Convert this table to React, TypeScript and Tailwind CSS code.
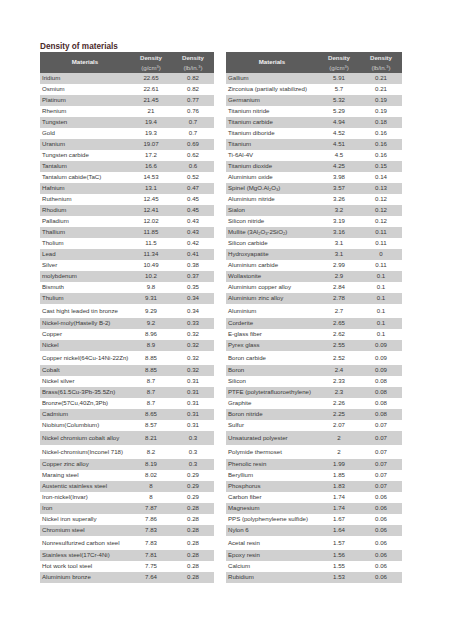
import React from 'react';

type Row = [React.ReactNode, string, string];

const TALL = new Set([21, 25, 32, 33, 41]);

const Sub = ({ children }: { children: React.ReactNode }) => (
  <sub className="text-[4px] align-baseline relative top-[1px]">{children}</sub>
);

const leftRows: Row[] = [
  ['Iridium', '22.65', '0.82'],
  ['Osmium', '22.61', '0.82'],
  ['Platinum', '21.45', '0.77'],
  ['Rhenium', '21', '0.76'],
  ['Tungsten', '19.4', '0.7'],
  ['Gold', '19.3', '0.7'],
  ['Uranium', '19.07', '0.69'],
  ['Tungsten carbide', '17.2', '0.62'],
  ['Tantalum', '16.6', '0.6'],
  ['Tantalum cabide(TaC)', '14.53', '0.52'],
  ['Hafnium', '13.1', '0.47'],
  ['Ruthenium', '12.45', '0.45'],
  ['Rhodium', '12.41', '0.45'],
  ['Palladium', '12.02', '0.43'],
  ['Thallium', '11.85', '0.43'],
  ['Tholium', '11.5', '0.42'],
  ['Lead', '11.34', '0.41'],
  ['Silver', '10.49', '0.38'],
  ['molybdenum', '10.2', '0.37'],
  ['Bismuth', '9.8', '0.35'],
  ['Thulium', '9.31', '0.34'],
  ['Cast hight leaded tin bronze', '9.29', '0.34'],
  ['Nickel-moly(Hastelly B-2)', '9.2', '0.33'],
  ['Copper', '8.96', '0.32'],
  ['Nickel', '8.9', '0.32'],
  ['Copper nickel(64Cu-14Ni-22Zn)', '8.85', '0.32'],
  ['Cobalt', '8.85', '0.32'],
  ['Nickel silver', '8.7', '0.31'],
  ['Brass(61.5Cu-3Pb-35.5Zn)', '8.7', '0.31'],
  ['Bronze(57Cu,40Zn,3Pb)', '8.7', '0.31'],
  ['Cadmium', '8.65', '0.31'],
  ['Niobium(Columbium)', '8.57', '0.31'],
  ['Nickel chromium cobalt alloy', '8.21', '0.3'],
  ['Nickel-chromium(Inconel 718)', '8.2', '0.3'],
  ['Copper zinc alloy', '8.19', '0.3'],
  ['Maraing steel', '8.02', '0.29'],
  ['Austentic stainless steel', '8', '0.29'],
  ['Iron-nickel(Invar)', '8', '0.29'],
  ['Iron', '7.87', '0.28'],
  ['Nickel iron superally', '7.86', '0.28'],
  ['Chromium steel', '7.83', '0.28'],
  ['Nonresulfurized carbon steel', '7.83', '0.28'],
  ['Stainless steel(17Cr-4Ni)', '7.81', '0.28'],
  ['Hot work tool steel', '7.75', '0.28'],
  ['Aluminium bronze', '7.64', '0.28'],
];

const rightRows: Row[] = [
  ['Gallium', '5.91', '0.21'],
  ['Zirconiua (partially stabilized)', '5.7', '0.21'],
  ['Germanium', '5.32', '0.19'],
  ['Titanium nitride', '5.29', '0.19'],
  ['Titanium carbide', '4.94', '0.18'],
  ['Titanium diboride', '4.52', '0.16'],
  ['Titanium', '4.51', '0.16'],
  ['Ti-6Al-4V', '4.5', '0.16'],
  ['Titanium dioxide', '4.25', '0.15'],
  ['Aluminium oxide', '3.98', '0.14'],
  [<>Spinel (MgO.Al<Sub>2</Sub>O<Sub>3</Sub>)</>, '3.57', '0.13'],
  ['Aluminium nitride', '3.26', '0.12'],
  ['Sialon', '3.2', '0.12'],
  ['Silicon nitride', '3.19', '0.12'],
  [<>Mullite (3Al<Sub>2</Sub>O<Sub>3</Sub>-2SiO<Sub>2</Sub>)</>, '3.16', '0.11'],
  ['Silicon carbide', '3.1', '0.11'],
  ['Hydroxyapatite', '3.1', '0'],
  ['Aluminium carbide', '2.99', '0.11'],
  ['Wollastonite', '2.9', '0.1'],
  ['Aluminium copper alloy', '2.84', '0.1'],
  ['Aluminium zinc alloy', '2.78', '0.1'],
  ['Aluminium', '2.7', '0.1'],
  ['Corderite', '2.65', '0.1'],
  ['E-glass fiber', '2.62', '0.1'],
  ['Pyrex glass', '2.55', '0.09'],
  ['Boron carbide', '2.52', '0.09'],
  ['Boron', '2.4', '0.09'],
  ['Silicon', '2.33', '0.08'],
  ['PTFE (polytetrafluoroethylene)', '2.3', '0.08'],
  ['Graphite', '2.26', '0.08'],
  ['Boron nitride', '2.25', '0.08'],
  ['Sulfur', '2.07', '0.07'],
  ['Unsaturated polyester', '2', '0.07'],
  ['Polymide thermoset', '2', '0.07'],
  ['Phenolic resin', '1.99', '0.07'],
  ['Beryllium', '1.85', '0.07'],
  ['Phosphorus', '1.83', '0.07'],
  ['Carbon fiber', '1.74', '0.06'],
  ['Magnesium', '1.74', '0.06'],
  ['PPS (polyphenyleene sulfide)', '1.67', '0.06'],
  ['Nylon 6', '1.64', '0.06'],
  ['Acetal resin', '1.57', '0.06'],
  ['Epoxy resin', '1.56', '0.06'],
  ['Calcium', '1.55', '0.06'],
  ['Rubidium', '1.53', '0.06'],
];

function DensityTable({ rows, nameWidth }: { rows: Row[]; nameWidth: string }) {
  return (
    <div className="flex flex-col">
      <div className="flex h-[21px] bg-[#5c5c5c] font-bold">
        <div className={`${nameWidth} flex items-center justify-center text-[#f2f2f2]`}>Materials</div>
        <div className="w-[42px] flex flex-col items-center justify-center gap-[2px] leading-[8px]">
          <span className="text-[#e8e8e8]">Density</span>
          <span className="font-normal text-[#cfcfcf]">
            (g/cm<sup className="text-[4px]">3</sup>)
          </span>
        </div>
        <div className="w-[42px] flex flex-col items-center justify-center gap-[2px] leading-[8px]">
          <span className="text-[#e8e8e8]">Density</span>
          <span className="font-normal text-[#cfcfcf]">
            (lb/in.<sup className="text-[4px]">3</sup>)
          </span>
        </div>
      </div>
      {rows.map((row, i) => (
        <div
          key={i}
          className={`flex items-center ${TALL.has(i) ? 'h-[14px]' : 'h-[11px]'} ${
            i % 2 === 0 ? 'bg-[#d0d0d0]' : 'bg-white'
          }`}
        >
          <div className={`${nameWidth} pl-[2px] whitespace-nowrap`}>{row[0]}</div>
          <div className="w-[42px] text-center">{row[1]}</div>
          <div className="w-[42px] text-center">{row[2]}</div>
        </div>
      ))}
    </div>
  );
}

export default function App() {
  return (
    <div
      className="w-[474px] h-[632px] bg-white pt-[40px] pl-[40px] text-[6.1px] leading-none text-[#383838]"
      style={{ fontFamily: '"Liberation Sans", Arial, sans-serif' }}
    >
      <h1 className="h-[12px] text-[8.2px] font-bold text-[#4b2a2a] leading-[10px] pt-[2px]">
        Density of materials
      </h1>
      <div className="flex gap-[12px]">
        <DensityTable rows={leftRows} nameWidth="w-[90px]" />
        <DensityTable rows={rightRows} nameWidth="w-[92px]" />
      </div>
    </div>
  );
}
